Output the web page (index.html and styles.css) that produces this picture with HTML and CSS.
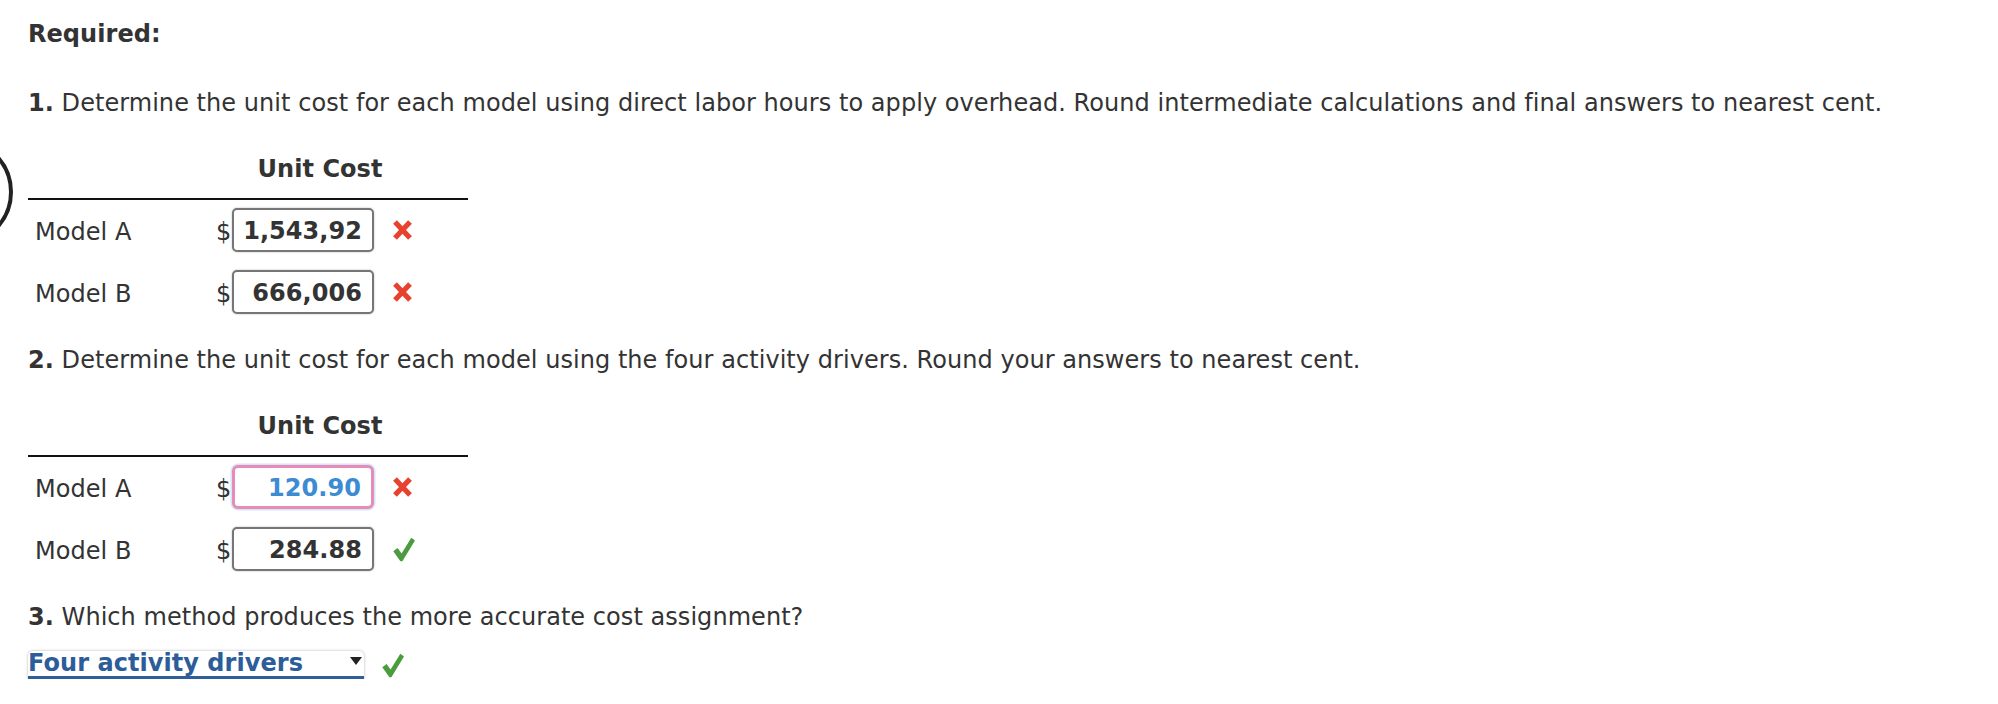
FILE: index.html
```html
<!DOCTYPE html>
<html lang="en">
<head>
<meta charset="utf-8">
<title>Required</title>
<link rel="stylesheet" href="styles.css">
</head>
<body>
<div class="page">
  <svg class="edge-arc" width="20" height="100" viewBox="0 0 20 100" aria-hidden="true">
    <circle cx="-41" cy="52" r="52" fill="none" stroke="#222" stroke-width="4"/>
  </svg>

  <p class="required">Required:</p>

  <p class="question"><b>1.</b> Determine the unit cost for each model using direct labor hours to apply overhead. Round intermediate calculations and final answers to nearest cent.</p>

  <div class="cost-table">
    <div class="head"><span class="head-spacer"></span><span class="head-title">Unit Cost</span></div>
    <div class="row">
      <span class="label">Model A</span><span class="dollar">$</span><span class="field">1,543,92</span>
      <span class="mark"><svg class="x-icon" width="19" height="20" viewBox="0 0 19 20"><path d="M2 2 L17 18 M17 2 L2 18" stroke="#e8412e" stroke-width="5.2" stroke-linecap="butt" fill="none"/></svg></span>
    </div>
    <div class="row">
      <span class="label">Model B</span><span class="dollar">$</span><span class="field">666,006</span>
      <span class="mark"><svg class="x-icon" width="19" height="20" viewBox="0 0 19 20"><path d="M2 2 L17 18 M17 2 L2 18" stroke="#e8412e" stroke-width="5.2" stroke-linecap="butt" fill="none"/></svg></span>
    </div>
  </div>

  <p class="question"><b>2.</b> Determine the unit cost for each model using the four activity drivers. Round your answers to nearest cent.</p>

  <div class="cost-table">
    <div class="head"><span class="head-spacer"></span><span class="head-title">Unit Cost</span></div>
    <div class="row">
      <span class="label">Model A</span><span class="dollar">$</span><span class="field field-active">120.90</span>
      <span class="mark"><svg class="x-icon" width="19" height="20" viewBox="0 0 19 20"><path d="M2 2 L17 18 M17 2 L2 18" stroke="#e8412e" stroke-width="5.2" stroke-linecap="butt" fill="none"/></svg></span>
    </div>
    <div class="row">
      <span class="label">Model B</span><span class="dollar">$</span><span class="field">284.88</span>
      <span class="mark"><svg class="check-icon" width="22" height="25" viewBox="0 0 22 25"><path d="M0.3 14.3 L4.6 11 L8.6 16.5 L18.3 0.8 L22 3.4 L9.4 24.2 L7.4 24.2 Z" fill="#4b9c3e"/></svg></span>
    </div>
  </div>

  <p class="question q3"><b>3.</b> Which method produces the more accurate cost assignment?</p>

  <div class="answer-line">
    <div class="select">
      <span class="select-text">Four activity drivers</span>
      <svg class="select-arrow" width="12" height="8" viewBox="0 0 12 8"><path d="M0 0 H12 L6 8 Z" fill="#222"/></svg>
    </div>
    <svg class="check-icon" width="22" height="25" viewBox="0 0 22 25"><path d="M0.3 14.3 L4.6 11 L8.6 16.5 L18.3 0.8 L22 3.4 L9.4 24.2 L7.4 24.2 Z" fill="#4b9c3e"/></svg>
  </div>
</div>
</body>
</html>
```

FILE: styles.css
```css
html, body {
  margin: 0;
  padding: 0;
  background: #fff;
}

body {
  font-family: "DejaVu Sans", Verdana, sans-serif;
  font-size: 24px;
  line-height: 28px;
  letter-spacing: 0.05px;
  color: #333;
}

.page {
  position: relative;
  padding: 20px 0 0 28px;
}

.edge-arc {
  position: absolute;
  left: 0;
  top: 140px;
}

.required {
  margin: 0;
  font-weight: bold;
}

.question {
  margin: 41px 0 0 0;
  white-space: nowrap;
}

.cost-table + .question {
  margin-top: 22px;
}

.cost-table {
  width: 440px;
  margin-top: 38px;
}

.head {
  display: flex;
  padding-bottom: 15px;
  border-bottom: 2px solid #111;
}

.head-spacer {
  width: 188px;
  flex: none;
}

.head-title {
  width: 208px;
  text-align: center;
  font-weight: bold;
}

.row {
  display: flex;
  align-items: center;
  padding: 8px 0 10px 0;
}

.label {
  width: 181px;
  padding-left: 7px;
  padding-top: 4px;
  flex: none;
}

.dollar {
  width: 16px;
  flex: none;
  padding-top: 4px;
}

.field {
  box-sizing: border-box;
  width: 142px;
  height: 44px;
  flex: none;
  border: 2px solid #767676;
  border-radius: 5px;
  box-shadow: 0 0 2px rgba(0, 0, 0, 0.3);
  text-align: right;
  padding: 7px 10px 0 0;
  font-weight: bold;
  background: #fff;
}

.field-active {
  border: 3px solid #e78bb8;
  border-radius: 6px;
  box-shadow: 0 0 0 1.5px #d4e6f8;
  color: #3c8bd3;
  padding: 6px 10px 0 0;
}

.mark {
  margin-left: 19px;
  display: flex;
  align-items: center;
}

.answer-line {
  display: flex;
  align-items: center;
  margin-top: 20px;
}

.select {
  box-sizing: border-box;
  width: 336px;
  height: 28px;
  display: flex;
  align-items: center;
  justify-content: space-between;
  background: #fff;
  border-radius: 5px 5px 0 0;
  border-bottom: 3px solid #2f5f96;
  box-shadow: 0 0 3px rgba(0, 0, 0, 0.3);
  line-height: 25px;
}

.select-text {
  font-weight: bold;
  color: #2c5d98;
}

.select-arrow {
  margin-right: 2px;
  margin-top: -6px;
}

.answer-line .check-icon {
  margin-left: 18px;
}
```
